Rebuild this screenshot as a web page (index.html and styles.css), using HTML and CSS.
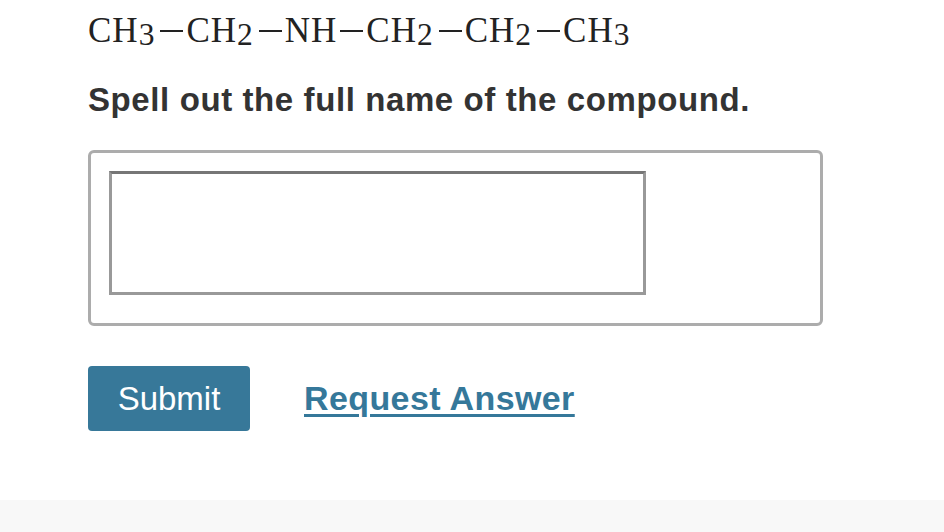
FILE: index.html
```html
<!DOCTYPE html>
<html lang="en">

<head>
    <meta charset="UTF-8">
    <meta name="viewport" content="width=device-width, initial-scale=1.0">
    <title>Question</title>
    <link rel="stylesheet" href="styles.css">
</head>

<body>
    <div class="container">
        <div class="formula">CH<sub>3</sub><span class="bond"></span>CH<sub>2</sub><span class="bond"></span>NH<span class="bond"></span>CH<sub>2</sub><span class="bond"></span>CH<sub>2</sub><span class="bond"></span>CH<sub>3</sub></div>

        <h2 class="prompt">Spell out the full name of the compound.</h2>

        <div class="answer-box">
            <textarea class="answer" aria-label="Answer"></textarea>
        </div>

        <div class="actions">
            <button class="submit">Submit</button>
            <a href="#" class="request">Request Answer</a>
        </div>
    </div>
    <div class="footer"></div>
</body>

</html>
```

FILE: styles.css
```css
body {
    margin: 0;
    background: #fff;
    font-family: "Liberation Sans", Arial, sans-serif;
    color: #333;
}

.container {
    padding-left: 88px;
    height: 500px;
    box-sizing: border-box;
    padding-top: 11px;
}

.formula {
    font-family: "Liberation Serif", "Times New Roman", serif;
    font-size: 35px;
    line-height: 40px;
    letter-spacing: 1px;
    color: #222;
}

.formula sub {
    font-size: 0.9em;
    line-height: 0;
    vertical-align: -0.1em;
    padding-right: 2px;
}

.bond {
    display: inline-block;
    width: 23px;
    height: 2px;
    margin: 0 3px;
    background: #222;
    vertical-align: 10px;
}

.prompt {
    margin: 0;
    margin-top: 29px;
    font-size: 33px;
    line-height: 40px;
    letter-spacing: 0.6px;
    font-weight: bold;
    color: #333;
}

.answer-box {
    margin-top: 30px;
    width: 735px;
    height: 176px;
    box-sizing: border-box;
    border: 3px solid #acacac;
    border-radius: 6px;
    padding: 18px;
}

.answer {
    display: block;
    width: 537px;
    height: 124px;
    box-sizing: border-box;
    margin: 0;
    border: 3px solid #999;
    border-top-color: #767676;
    resize: none;
    font-size: 20px;
}

.actions {
    display: flex;
    align-items: center;
    gap: 54px;
    margin-top: 40px;
}

.submit {
    width: 162px;
    height: 65px;
    background: #377899;
    border: none;
    border-radius: 4px;
    color: #fff;
    font-family: "Liberation Sans", Arial, sans-serif;
    font-size: 33px;
}

.request {
    font-size: 34px;
    letter-spacing: 0.4px;
    font-weight: bold;
    color: #35789a;
    text-decoration: underline;
    text-decoration-thickness: 3px;
    text-underline-offset: 4px;
}

.footer {
    height: 32px;
    background: #f8f8f8;
}
```
